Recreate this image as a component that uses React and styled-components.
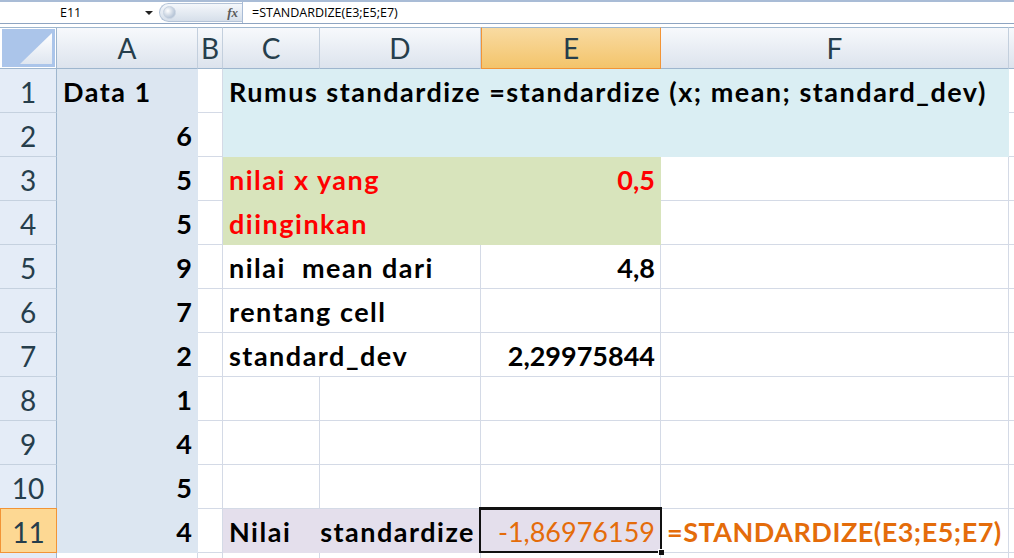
import React from "react";
import styled, { createGlobalStyle, css } from "styled-components";

const GRID = "#d4dae6";
const HEAD_LINE = "#9eb6ce";
const COLS = "57px 141px 25px 97px 161px 180px 348px 1fr";

const BLUE = "#daeef3";
const COL_A = "#dce6f1";
const GREEN = "#d8e4bc";
const LAVENDER = "#e4dfec";
const RED = "#ff0000";
const ORANGE = "#e46c0a";

const GlobalStyle = createGlobalStyle`
  html, body {
    margin: 0;
    padding: 0;
    background: #fff;
  }
  body {
    width: 1014px;
    height: 558px;
    overflow: hidden;
    font-family: Lato, "Liberation Sans", sans-serif;
  }
`;

// Formula bar
const FormulaBar = styled.div`
  display: flex;
  height: 21px;
  border-top: 2px solid #a9bcd6;
  border-bottom: 1px solid #8ea4c1;
  background: #fff;
  font-family: "Open Sans", "Liberation Sans", sans-serif;
  font-size: 12.5px;
  color: #000;
`;

const NameBox = styled.div`
  width: 159px;
  box-sizing: border-box;
  display: flex;
  align-items: center;
  justify-content: space-between;
  padding: 0 6px 0 60px;
`;

const DropArrow = styled.span`
  width: 0;
  height: 0;
  border-left: 4px solid transparent;
  border-right: 4px solid transparent;
  border-top: 4px solid #222;
`;

const FxPill = styled.div`
  width: 83px;
  margin-top: 1px;
  height: 19px;
  box-sizing: border-box;
  border: 1px solid #b4c3d7;
  border-right: none;
  border-radius: 10px 0 0 10px;
  background: linear-gradient(#f4f7fb, #d6dfea);
  display: flex;
  align-items: center;
  justify-content: space-between;
  padding: 0 4px 0 3px;
`;

const Knob = styled.span`
  width: 11px;
  height: 11px;
  border-radius: 50%;
  background: radial-gradient(circle at 35% 35%, #ffffff, #b8c6d8 70%);
  border: 1px solid #c8d3e1;
`;

const FxLabel = styled.span`
  font-family: "Liberation Serif", serif;
  font-style: italic;
  font-weight: bold;
  font-size: 13px;
  color: #5a5a5a;
`;

const FormulaText = styled.div`
  flex: 1;
  display: flex;
  align-items: center;
  padding-left: 9px;
  border-left: 1px solid #a9bcd6;
`;

const Gap = styled.div`
  height: 3px;
  background: #fff;
`;

// Sheet
const Sheet = styled.div`
  display: grid;
  grid-template-columns: ${COLS};
  grid-template-rows: 42px;
  grid-auto-rows: 44px;
`;

const headBase = css`
  box-sizing: border-box;
  display: flex;
  align-items: center;
  justify-content: center;
  font-size: 28px;
  color: #263e4c;
`;

const Corner = styled.div`
  box-sizing: border-box;
  border-top: 1px solid ${HEAD_LINE};
  border-bottom: 1px solid ${HEAD_LINE};
  border-right: 1px solid ${HEAD_LINE};
  background: #fff;
  padding: 1px 1px 1px 2px;
  display: flex;
`;

const CornerFace = styled.div`
  flex: 1;
  background: #abc5ea;
  display: flex;
  align-items: flex-end;
  justify-content: flex-end;
  padding: 0 3px 3px 0;
`;

const ColHead = styled.div`
  ${headBase}
  border-top: 1px solid ${HEAD_LINE};
  border-bottom: 1px solid ${(p) => (p.$active ? "#f29436" : HEAD_LINE)};
  border-right: 1px solid ${(p) => (p.$active ? "#f29436" : "#c3cfdd")};
  border-left: ${(p) => (p.$active ? "1px solid #f29436" : "none")};
  background: ${(p) =>
    p.$active
      ? "linear-gradient(#f9dba2, #f3c46b)"
      : "linear-gradient(#f7f9fc, #dce3ed)"};
`;

const RowHead = styled.div`
  ${headBase}
  padding-top: 2px;
  border-right: 1px solid ${(p) => (p.$active ? "#f29436" : HEAD_LINE)};
  border-bottom: 1px solid ${(p) => (p.$active ? "#f29436" : "#c5d1df")};
  border-left: ${(p) => (p.$active ? "1px solid #f29436" : "none")};
  border-top: ${(p) => (p.$active ? "1px solid #f29436" : "none")};
  margin-top: ${(p) => (p.$active ? "-1px" : "0")};
  background: ${(p) => (p.$active ? "#fdd893" : "#e4ecf7")};
`;

const Cell = styled.div`
  box-sizing: border-box;
  position: relative;
  display: flex;
  align-items: flex-end;
  justify-content: ${(p) => (p.$right ? "flex-end" : "flex-start")};
  padding: 0 ${(p) => (p.$right ? "5px" : "4px")} 7px 6px;
  grid-column: span ${(p) => p.$span || 1};
  background: ${(p) => p.$fill || "#fff"};
  border-right: 1px solid ${(p) => p.$fill || GRID};
  border-bottom: 1px solid ${(p) => p.$fill || GRID};
  color: ${(p) => p.$color || "#000"};
  font-size: 27px;
  font-weight: ${(p) => (p.$light ? 400 : 700)};
  letter-spacing: ${(p) => p.$track ?? 1.5}px;
  white-space: pre;
  line-height: 1;
  z-index: ${(p) => (p.$over ? 1 : 0)};
`;

const Selection = styled.span`
  position: absolute;
  left: -2px;
  top: -2px;
  right: -2px;
  bottom: -1px;
  border: 2px solid #111;
  border-top-width: 3px;
  pointer-events: none;

  &::after {
    content: "";
    position: absolute;
    right: -4px;
    bottom: -4px;
    width: 5px;
    height: 5px;
    background: #111;
    border: 1px solid #fff;
    border-right: none;
    border-bottom: none;
  }
`;

const colLetters = ["A", "B", "C", "D", "E", "F", ""];
const colA = ["Data 1", "6", "5", "5", "9", "7", "2", "1", "4", "5", "4"];

const CornerTriangle = () => (
  <svg width="32" height="31" viewBox="0 0 32 31">
    <defs>
      <linearGradient id="tri" x1="0" y1="0" x2="0" y2="1">
        <stop offset="0" stopColor="#ffffff" />
        <stop offset="1" stopColor="#dfe6f0" />
      </linearGradient>
    </defs>
    <polygon points="32,0 32,31 0,31" fill="url(#tri)" />
  </svg>
);

const RowCells = ({ row }) => {
  switch (row) {
    case 1:
      return (
        <>
          <Cell $span={4} $fill={BLUE}>
            Rumus standardize =standardize (x; mean; standard_dev)
          </Cell>
          <Cell />
        </>
      );
    case 2:
      return (
        <>
          <Cell $span={4} $fill={BLUE} />
          <Cell />
        </>
      );
    case 3:
      return (
        <>
          <Cell $span={2} $fill={GREEN} $color={RED}>
            nilai x yang
          </Cell>
          <Cell $fill={GREEN} $color={RED} $right $track={0}>
            0,5
          </Cell>
          <Cell />
          <Cell />
        </>
      );
    case 4:
      return (
        <>
          <Cell $span={3} $fill={GREEN} $color={RED}>
            diinginkan
          </Cell>
          <Cell />
          <Cell />
        </>
      );
    case 5:
      return (
        <>
          <Cell $span={2}>nilai  mean dari</Cell>
          <Cell $right $track={0}>
            4,8
          </Cell>
          <Cell />
          <Cell />
        </>
      );
    case 6:
      return (
        <>
          <Cell $span={2}>rentang cell</Cell>
          <Cell />
          <Cell />
          <Cell />
        </>
      );
    case 7:
      return (
        <>
          <Cell $span={2}>standard_dev</Cell>
          <Cell $right $track={0}>
            2,29975844
          </Cell>
          <Cell />
          <Cell />
        </>
      );
    case 11:
      return (
        <>
          <Cell $fill={LAVENDER}>Nilai</Cell>
          <Cell $fill={LAVENDER} $right>
            standardize
          </Cell>
          <Cell $fill={LAVENDER} $color={ORANGE} $light $right $over $track={0}>
            -1,86976159
            <Selection />
          </Cell>
          <Cell $color={ORANGE} $track={0.5}>
            =STANDARDIZE(E3;E5;E7)
          </Cell>
          <Cell />
        </>
      );
    default:
      return (
        <>
          <Cell />
          <Cell />
          <Cell />
          <Cell />
          <Cell />
        </>
      );
  }
};

export default function App() {
  const rows = Array.from({ length: 12 }, (_, i) => i + 1);
  return (
    <>
      <GlobalStyle />
      <FormulaBar>
        <NameBox>
          <span>E11</span>
          <DropArrow />
        </NameBox>
        <FxPill>
          <Knob />
          <FxLabel>fx</FxLabel>
        </FxPill>
        <FormulaText>=STANDARDIZE(E3;E5;E7)</FormulaText>
      </FormulaBar>
      <Gap />
      <Sheet>
        <Corner>
          <CornerFace>
            <CornerTriangle />
          </CornerFace>
        </Corner>
        {colLetters.map((c, i) => (
          <ColHead key={i} $active={c === "E"}>
            {c}
          </ColHead>
        ))}
        {rows.map((r) => (
          <React.Fragment key={r}>
            <RowHead $active={r === 11}>{r <= 11 ? r : ""}</RowHead>
            <Cell
              $fill={r <= 11 ? COL_A : undefined}
              $right={r > 1}
              $track={r > 1 ? 0 : 1.5}
            >
              {colA[r - 1] || ""}
            </Cell>
            <Cell />
            <RowCells row={r} />
          </React.Fragment>
        ))}
      </Sheet>
    </>
  );
}
